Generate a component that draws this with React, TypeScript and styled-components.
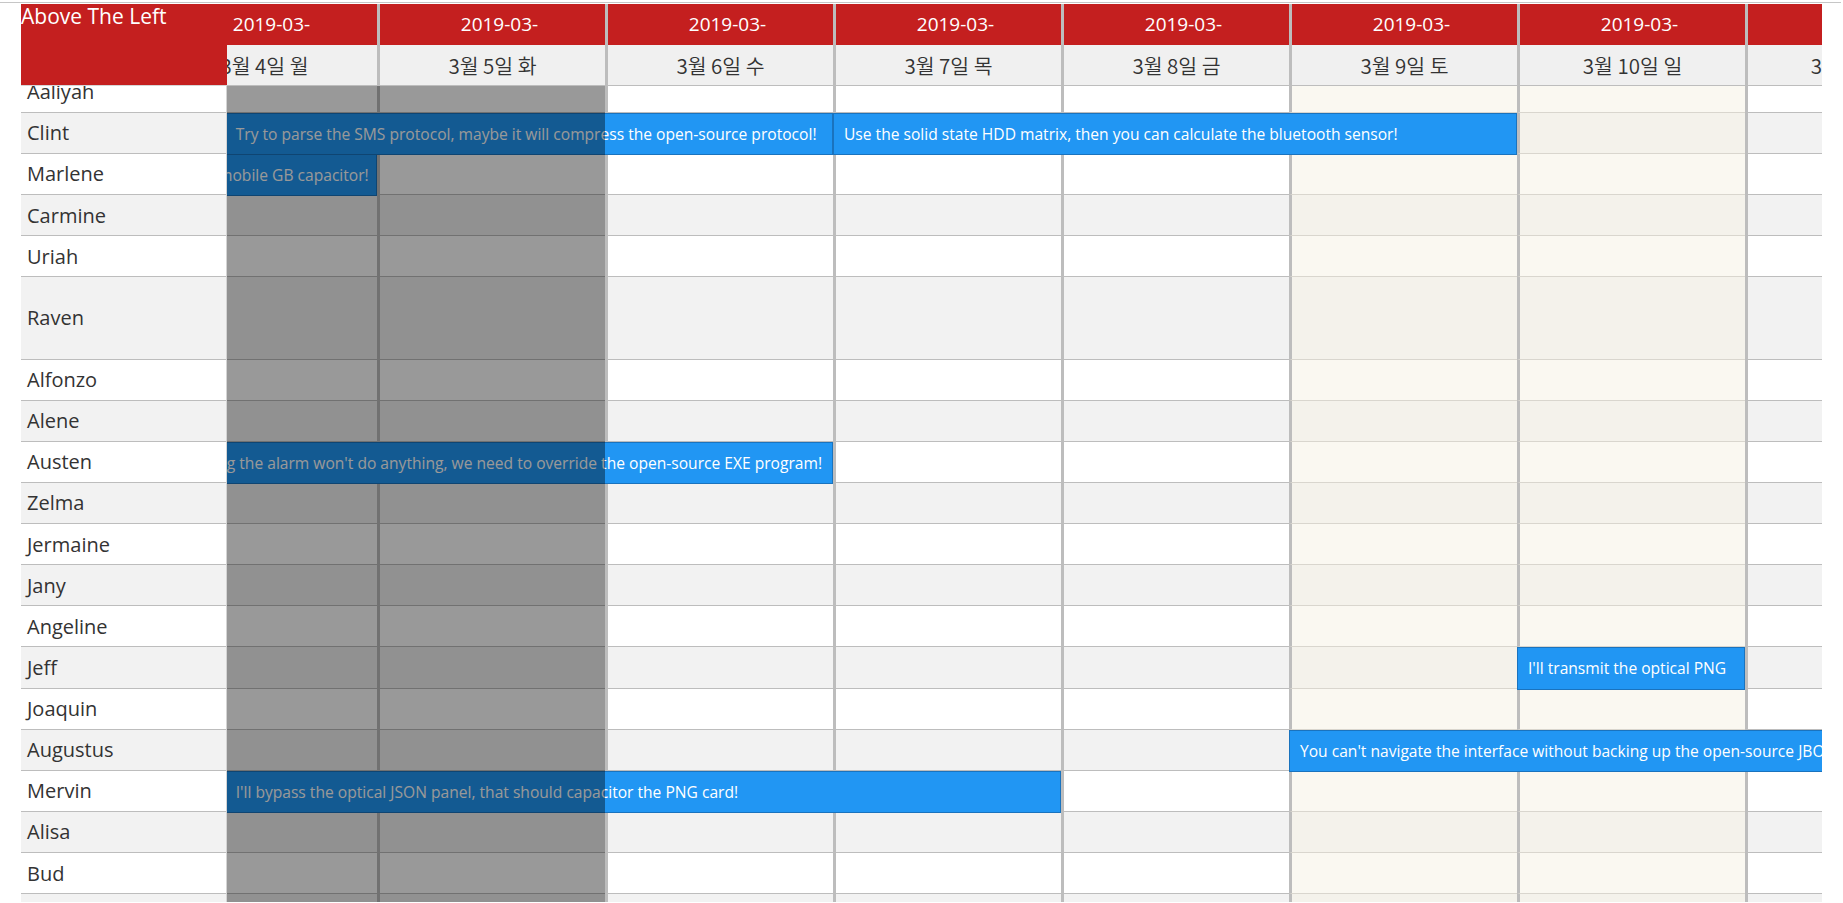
import React from 'react';
import styled, { createGlobalStyle } from 'styled-components';

const COL_W = 228;
const ROW_H = 41.14;
const NAME_W = 205.6;
const SCROLL_X = 77.6;
const SCROLL_Y = 14.4;

const GlobalStyle = createGlobalStyle`
  html, body {
    margin: 0;
    padding: 0;
    background: #fff;
  }
  body {
    font-family: "Open Sans", "Noto Sans", sans-serif;
    overflow: hidden;
  }
`;

type Day = { date: string; label: string; weekend?: boolean };
type SchedEvent = { start: number; end: number; text: string };
type Resource = { name: string; tall?: boolean; events?: SchedEvent[] };

const days: Day[] = [
  { date: '2019-03-', label: '3월 4일 월' },
  { date: '2019-03-', label: '3월 5일 화' },
  { date: '2019-03-', label: '3월 6일 수' },
  { date: '2019-03-', label: '3월 7일 목' },
  { date: '2019-03-', label: '3월 8일 금' },
  { date: '2019-03-', label: '3월 9일 토', weekend: true },
  { date: '2019-03-', label: '3월 10일 일', weekend: true },
  { date: '2019-03-', label: '3월 11일 월' },
];

// days before this index are blocked out (dimmed)
const BLOCKED_UNTIL = 2;

const resources: Resource[] = [
  { name: 'Aaliyah' },
  {
    name: 'Clint',
    events: [
      { start: 0.332, end: 3, text: 'Try to parse the SMS protocol, maybe it will compress the open-source protocol!' },
      { start: 3, end: 6, text: 'Use the solid state HDD matrix, then you can calculate the bluetooth sensor!' },
    ],
  },
  { name: 'Marlene', events: [{ start: -0.52, end: 1, text: 'We need to connect the mobile GB capacitor!' }] },
  { name: 'Carmine' },
  { name: 'Uriah' },
  { name: 'Raven', tall: true },
  { name: 'Alfonzo' },
  { name: 'Alene' },
  {
    name: 'Austen',
    events: [{ start: 0.094, end: 3, text: "Parsing the alarm won't do anything, we need to override the open-source EXE program!" }],
  },
  { name: 'Zelma' },
  { name: 'Jermaine' },
  { name: 'Jany' },
  { name: 'Angeline' },
  { name: 'Jeff', events: [{ start: 6, end: 7, text: "I'll transmit the optical PNG" }] },
  { name: 'Joaquin' },
  {
    name: 'Augustus',
    events: [{ start: 5, end: 9, text: "You can't navigate the interface without backing up the open-source JBOD array!" }],
  },
  {
    name: 'Mervin',
    events: [{ start: 0.332, end: 4, text: "I'll bypass the optical JSON panel, that should capacitor the PNG card!" }],
  },
  { name: 'Alisa' },
  { name: 'Bud' },
  { name: 'Leonor' },
];

export default function App() {
  return (
    <>
      <GlobalStyle />
      <Frame>
        <Scheduler>
          <Corner>Above The Left</Corner>

          <HeaderViewport>
            <HeaderTrack>
              {days.map((d, i) => (
                <HeaderCol key={i}>
                  <DateCell>{d.date}</DateCell>
                  <DayCell>{d.label}</DayCell>
                </HeaderCol>
              ))}
            </HeaderTrack>
          </HeaderViewport>

          <NamesViewport>
            <NamesTrack>
              {resources.map((r, i) => (
                <NameCell key={r.name} $striped={i % 2 === 1} $tall={r.tall}>
                  {r.name}
                </NameCell>
              ))}
            </NamesTrack>
          </NamesViewport>

          <BodyViewport>
            <BodyTrack>
              {resources.map((r, i) => (
                <BodyRow key={r.name} $tall={r.tall}>
                  {days.map((d, j) => (
                    <Cell key={j} $striped={i % 2 === 1} $weekend={d.weekend} />
                  ))}
                  {r.events?.map((e, k) => (
                    <EventBar
                      key={k}
                      style={{ left: e.start * COL_W, width: (e.end - e.start) * COL_W }}
                    >
                      <EventText>{e.text}</EventText>
                    </EventBar>
                  ))}
                </BodyRow>
              ))}
              <Blocked style={{ width: BLOCKED_UNTIL * COL_W }} />
            </BodyTrack>
          </BodyViewport>
        </Scheduler>
      </Frame>
    </>
  );
}

const Frame = styled.div`
  margin-top: 2px;
  border-top: 1px solid #c6c6c6;
  width: 1841px;
  height: 900px;
  padding: 1px 0 0 21px;
  box-sizing: border-box;
`;

const Scheduler = styled.div`
  width: 1801px;
  height: 100%;
  display: grid;
  grid-template-columns: ${NAME_W}px 1fr;
  grid-template-rows: 82px 1fr;
  overflow: hidden;
`;

const Corner = styled.div`
  background: #c41f1f;
  color: #fff;
  font-size: 21px;
  line-height: 25px;
  border-bottom: 1px solid #d6d6d6;
  box-sizing: border-box;
`;

const HeaderViewport = styled.div`
  overflow: hidden;
`;

const HeaderTrack = styled.div`
  display: flex;
  margin-left: -${SCROLL_X}px;
`;

const HeaderCol = styled.div`
  flex: none;
  width: ${COL_W}px;
  display: grid;
  grid-template-rows: 40.5px 41.5px;
`;

const DateCell = styled.div`
  background: #c41f1f;
  color: #fff;
  border-left: 3px solid #bdbdbd;
  display: flex;
  align-items: center;
  justify-content: center;
  padding-left: 14px;
  font-size: 19px;
  box-sizing: border-box;
`;

const DayCell = styled.div`
  background: #f0f0f0;
  color: #333;
  border-left: 3px solid #bdbdbd;
  border-bottom: 1px solid #bdbdbd;
  display: flex;
  align-items: center;
  justify-content: center;
  font-family: "Noto Sans CJK KR", "Open Sans", sans-serif;
  font-size: 20.5px;
  font-weight: 350;
  box-sizing: border-box;
`;

const NamesViewport = styled.div`
  overflow: hidden;
  border-right: 1px solid #d4d4d4;
`;

const NamesTrack = styled.div`
  margin-top: -${SCROLL_Y}px;
`;

const NameCell = styled.div<{ $striped?: boolean; $tall?: boolean }>`
  height: ${(p) => (p.$tall ? ROW_H * 2 : ROW_H)}px;
  box-sizing: border-box;
  border-bottom: 1px solid #bdbdbd;
  background: ${(p) => (p.$striped ? '#f2f2f2' : '#fff')};
  display: flex;
  align-items: center;
  padding-left: 6px;
  font-size: 20px;
  color: #333;
`;

const BodyViewport = styled.div`
  overflow: hidden;
`;

const BodyTrack = styled.div`
  position: relative;
  margin-top: -${SCROLL_Y}px;
  margin-left: -${SCROLL_X}px;
  width: ${COL_W * 8}px;
`;

const BodyRow = styled.div<{ $tall?: boolean }>`
  position: relative;
  display: flex;
  height: ${(p) => (p.$tall ? ROW_H * 2 : ROW_H)}px;
`;

const Cell = styled.div<{ $striped?: boolean; $weekend?: boolean }>`
  flex: none;
  width: ${COL_W}px;
  box-sizing: border-box;
  border-left: 3px solid #bdbdbd;
  border-bottom: 1px solid ${(p) => (p.$weekend ? '#d9d6ce' : '#bdbdbd')};
  background: ${(p) =>
    p.$weekend ? (p.$striped ? '#f4f2eb' : '#faf8f1') : p.$striped ? '#f2f2f2' : '#fff'};
`;

const EventBar = styled.div`
  position: absolute;
  top: 0;
  bottom: -1px;
  box-sizing: border-box;
  background: #2196f3;
  border: 1px solid #1a73be;
  color: #fff;
  display: flex;
  align-items: center;
  padding: 0 10px;
  overflow: hidden;
  z-index: 1;
`;

const EventText = styled.span`
  white-space: nowrap;
  font-size: 15.6px;
`;

const Blocked = styled.div`
  position: absolute;
  left: 0;
  top: 0;
  bottom: 0;
  background: rgba(0, 0, 0, 0.4);
  z-index: 2;
  pointer-events: none;
`;
